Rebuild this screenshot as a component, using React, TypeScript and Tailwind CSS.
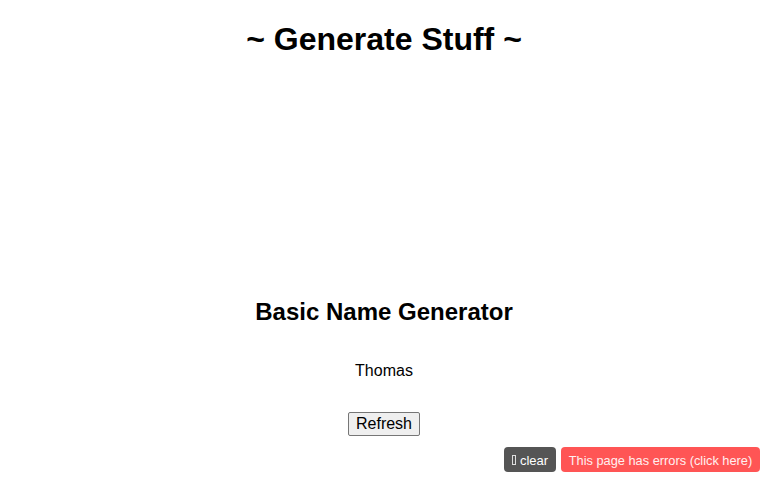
export default function App() {
  return (
    <div className="relative min-h-[480px] text-center text-black font-['Liberation_Sans',Arial,sans-serif]">
      <h1 className="pt-[21px] text-[32px] leading-[37px] font-bold">~ Generate Stuff ~</h1>
      <div className="h-[240px]" />
      <h2 className="text-[24px] leading-[28px] font-bold">Basic Name Generator</h2>
      <p className="mt-[36px] text-[16px] leading-[18px]">Thomas</p>
      <div className="mt-[32px] flex justify-center">
        <button className="h-[24px] w-[72px] rounded-[2px] border border-[#767676] bg-[#efefef] px-[6px] text-[16px] leading-[18px] text-black">
          Refresh
        </button>
      </div>
      <div className="fixed bottom-[8px] right-[8px] flex gap-[5px] text-[13px] leading-[15px] text-white">
        <button className="flex h-[25px] w-[52px] items-center justify-center gap-[4px] rounded-[4px] bg-[#555555] pt-[1px]">
          <span className="inline-block h-[10px] w-[4px] border border-white/80" />
          <span>clear</span>
        </button>
        <button className="flex h-[25px] w-[199px] items-center justify-center rounded-[4px] bg-[#ff5555] pt-[1px] text-[12.8px] leading-[15px] text-[#fff0f0]">
          This page has errors (click here)
        </button>
      </div>
    </div>
  );
}
